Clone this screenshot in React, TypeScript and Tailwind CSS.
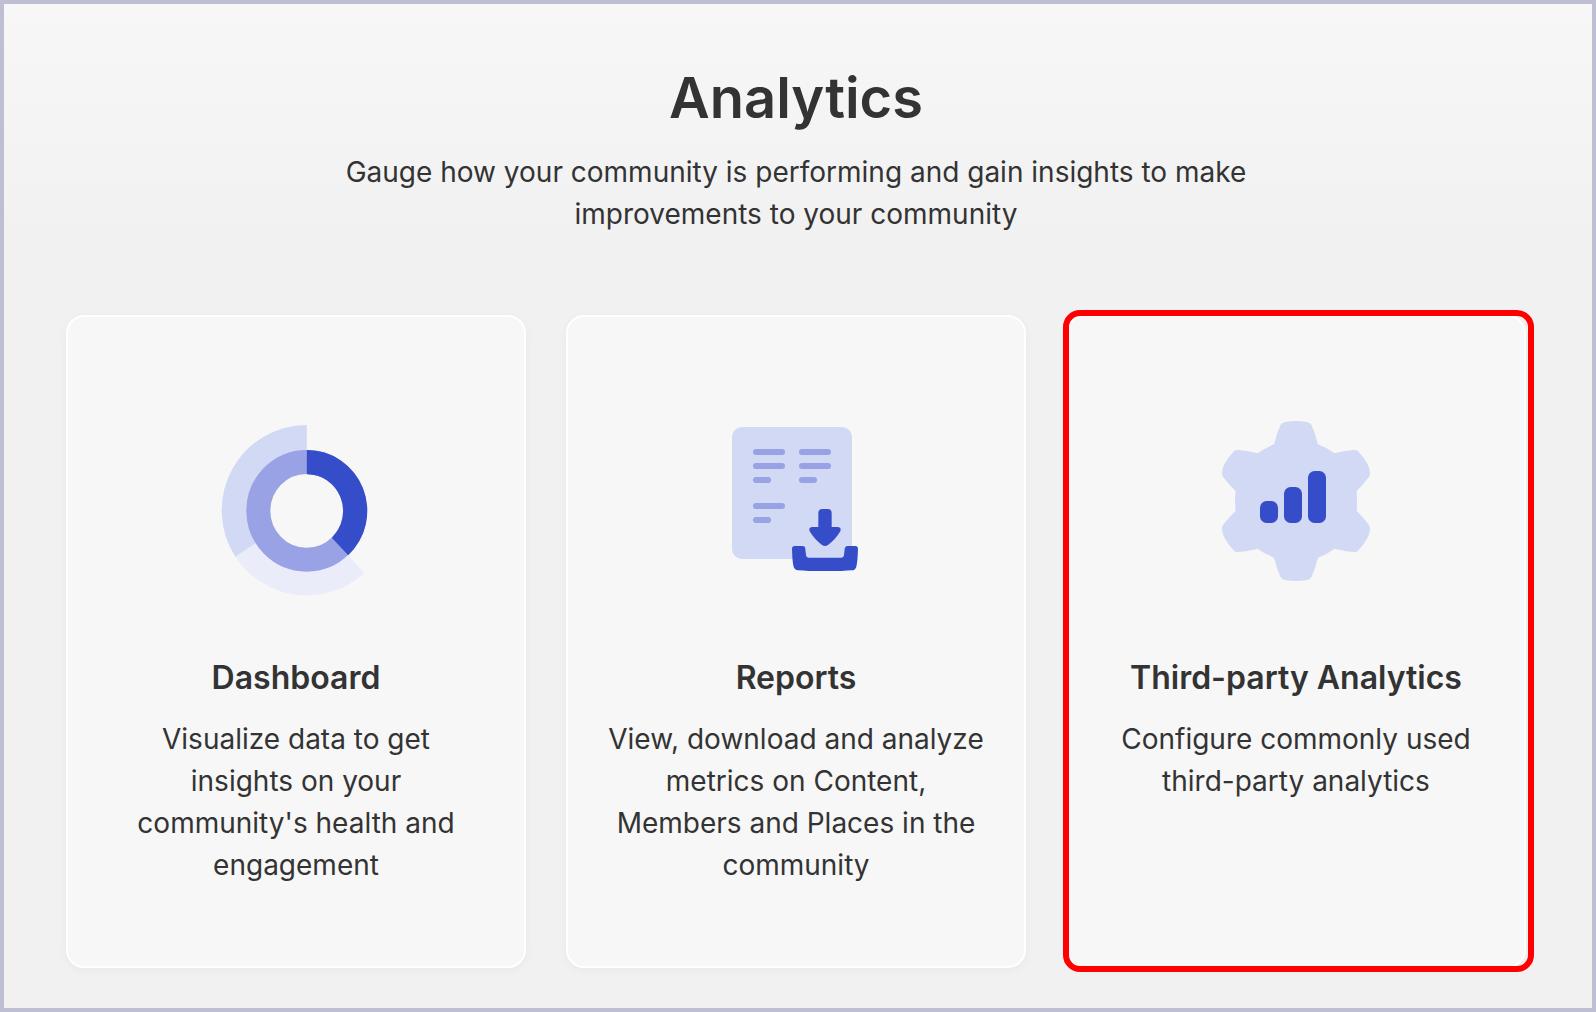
import type { ReactNode } from 'react'

type AnalyticsCardProps = {
  title: string
  description: string
  href: string
  icon: ReactNode
  highlighted?: boolean
}

function DashboardIcon() {
  return (
    <svg className="size-[200px]" viewBox="-12 3 600 600" aria-hidden="true">
      <path
        d="M320.5 75V182A150 150 0 0 0 194 413L106 470A255 256 0 0 1 320.5 75Z"
        fill="#d2d9f5"
      />
      <path
        d="M106 470L194 413A150 150 0 0 0 422 442L493 519A256 256 0 0 1 106 470Z"
        fill="#eaecfa"
      />
      <ellipse cx="320" cy="332.5" rx="145" ry="146.5" fill="none" stroke="#98a2e4" strokeWidth="72" />
      <path d="M320.5 150A180.5 182.5 0 0 1 444.5 466L395.5 413A109 110.5 0 0 0 320.5 222.5Z" fill="#354dc9" />
    </svg>
  )
}

function ReportsIcon() {
  return (
    <svg className="size-[200px]" viewBox="-42 3 600 600" aria-hidden="true">
      <rect x="66" y="81" width="360" height="396" rx="30" fill="#d2d9f5" />
      <g fill="#98a2e4">
        <rect x="129" y="147" width="96" height="18" rx="9" />
        <rect x="129" y="189" width="96" height="18" rx="9" />
        <rect x="129" y="231" width="54" height="18" rx="9" />
        <rect x="267" y="147" width="96" height="18" rx="9" />
        <rect x="267" y="189" width="96" height="18" rx="9" />
        <rect x="267" y="231" width="54" height="18" rx="9" />
        <rect x="129" y="309" width="96" height="18" rx="9" />
        <rect x="129" y="351" width="54" height="18" rx="9" />
      </g>
      <g fill="#354dc9">
        <path d="M337 327H353Q365 327 365 340V381H384Q395 382 391 394Q377 418 354 435Q345 441 336 435Q313 418 299 394Q295 382 306 381H325V340Q325 327 337 327Z" />
        <path d="M254 438H277Q286 438 286 448L288 465Q289 473 297 473H393Q401 473 402 465L404 448Q405 438 413 438H436Q444 438 444 447C443 469 443 482 439 500Q436 511 425 511Q410 512 395 513H296Q280 512 264 511Q254 510 251 500C247 482 247 469 246 447Q246 438 254 438Z" />
      </g>
    </svg>
  )
}

function ThirdPartyIcon() {
  return (
    <svg className="size-[200px]" viewBox="-12 3 600 600" aria-hidden="true">
      <path
        d="M222 133Q230 101 241 76Q247 63 288 63Q329 63 335 76Q346 101 354 133Q381 143 404 160Q431 153 460 150Q469 149 474 154Q509 191 510 218Q511 224 507 230Q491 252 470 273Q472 303 470 332Q491 354 507 375Q511 381 510 388Q509 415 474 452Q469 457 460 456Q431 453 404 446Q381 463 354 473Q346 505 335 530Q329 543 288 543Q247 543 241 530Q230 505 222 473Q196 463 173 446Q145 453 116 456Q107 457 102 452Q67 415 66 388Q65 381 69 375Q85 354 107 332Q103 303 107 273Q85 252 69 230Q65 224 66 218Q67 191 102 154Q107 149 116 150Q145 153 173 160Q196 143 222 133Z"
        fill="#d2d9f5"
      />
      <g fill="#354dc9">
        <rect x="180" y="303" width="54" height="66" rx="20" />
        <rect x="252" y="261" width="54" height="108" rx="20" />
        <rect x="324" y="213" width="54" height="156" rx="20" />
      </g>
    </svg>
  )
}

function AnalyticsCard({ title, description, href, icon, highlighted }: AnalyticsCardProps) {
  return (
    <a
      href={href}
      className="relative flex flex-1 flex-col items-center rounded-[18px] border-2 border-white bg-[#f7f7f7] px-10 pt-[84px] pb-20 text-center shadow-[0_2px_10px_rgba(0,0,0,0.04)]"
    >
      {icon}
      <h2 className="mt-[57px] text-[32px] leading-10 font-semibold whitespace-nowrap">{title}</h2>
      <p className="mt-5 text-[28px] leading-[42px]">{description}</p>
      {highlighted && (
        <span className="pointer-events-none absolute -top-[7px] -right-[10px] -bottom-[6px] -left-[5px] rounded-[17px] border-6 border-[#ff0000]" />
      )}
    </a>
  )
}

const cards: AnalyticsCardProps[] = [
  {
    title: 'Dashboard',
    description: "Visualize data to get insights on your community's health and engagement",
    href: '#dashboard',
    icon: <DashboardIcon />,
  },
  {
    title: 'Reports',
    description: 'View, download and analyze metrics on Content, Members and Places in the community',
    href: '#reports',
    icon: <ReportsIcon />,
  },
  {
    title: 'Third-party Analytics',
    description: 'Configure commonly used third-party analytics',
    href: '#third-party',
    icon: <ThirdPartyIcon />,
    highlighted: true,
  },
]

export default function App() {
  return (
    <main className="min-h-screen border-4 border-[#bfbfd4] bg-[#f1f1f1] bg-[linear-gradient(#f7f7f7,#f1f1f1_240px)] pt-[62px] pr-[66px] pb-9 pl-[62px] font-['Inter',sans-serif] text-[#333333]">
      <header className="text-center">
        <h1 className="text-[56px] leading-16 font-semibold">Analytics</h1>
        <p className="mx-auto mt-[21px] max-w-[960px] text-[28px] leading-[42px]">
          Gauge how your community is performing and gain insights to make improvements to your
          community
        </p>
      </header>
      <div className="mt-20 flex gap-10">
        {cards.map((card) => (
          <AnalyticsCard key={card.title} {...card} />
        ))}
      </div>
    </main>
  )
}
